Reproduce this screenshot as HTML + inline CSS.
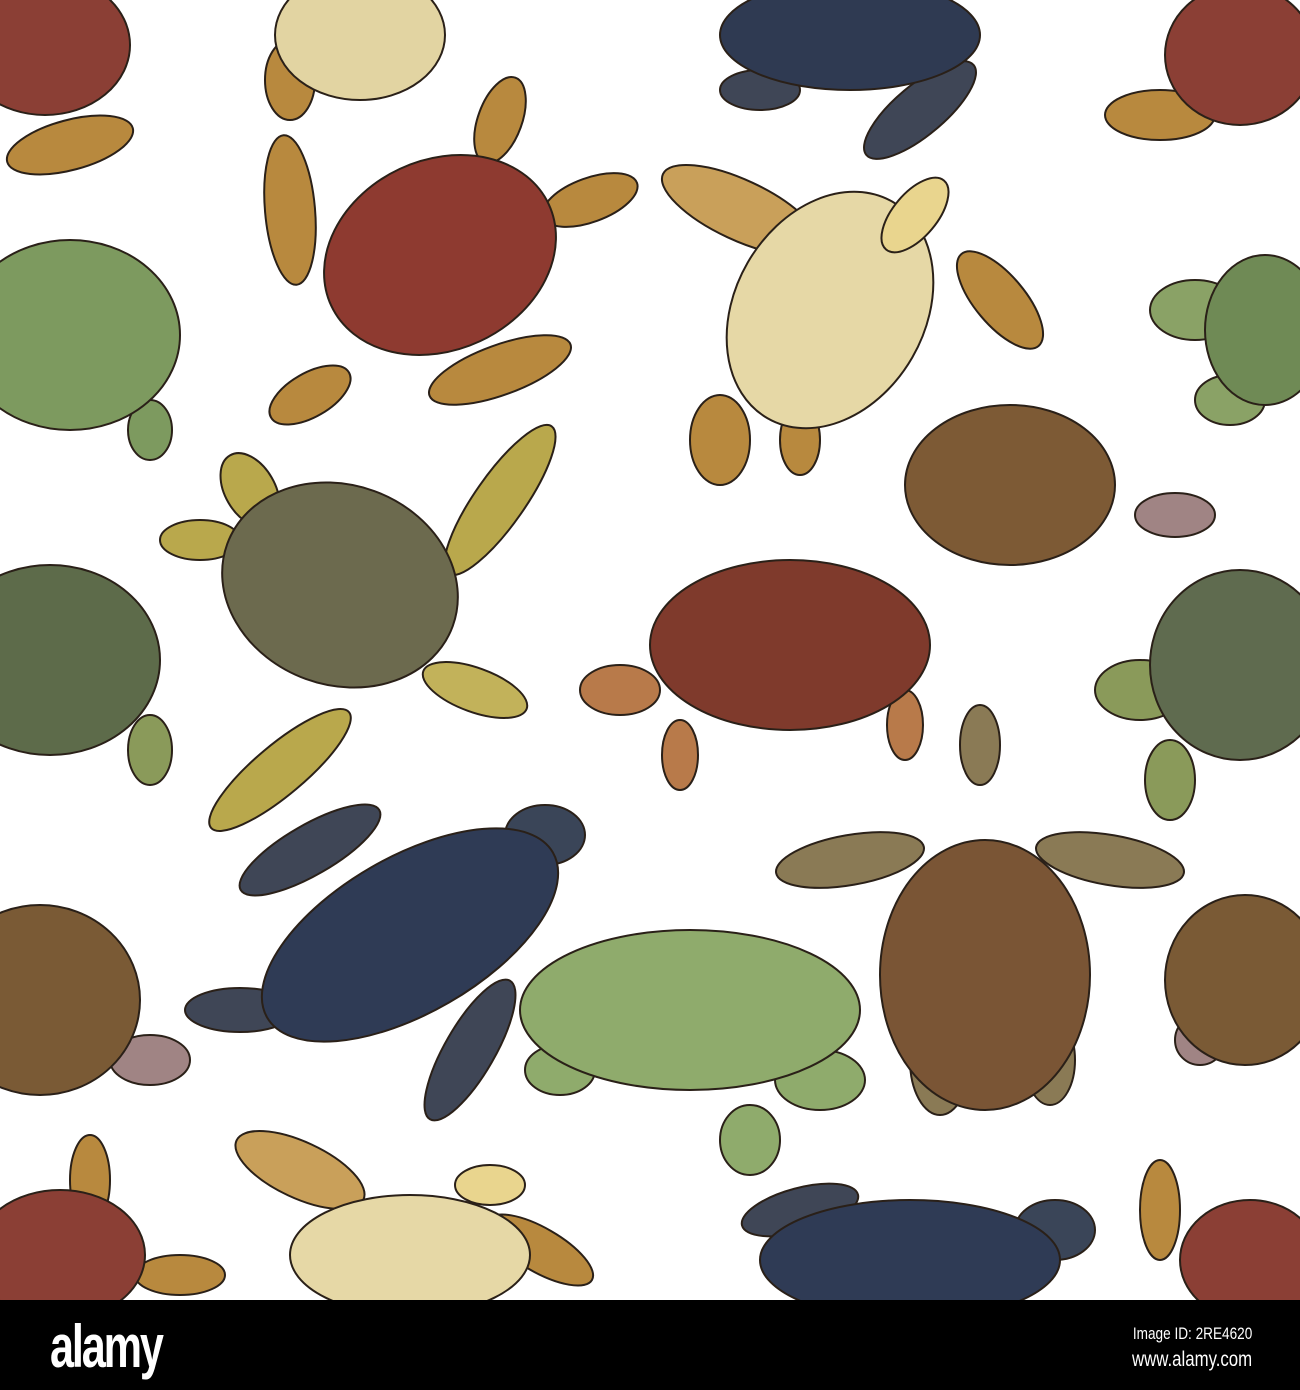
<!DOCTYPE html>
<html><head><meta charset="utf-8"><style>
html,body{margin:0;padding:0;background:#fff;width:1300px;height:1390px;overflow:hidden}
.bar{position:absolute;left:0;top:1300px;width:1300px;height:90px;background:#000}
.logo{position:absolute;left:50px;top:12px;color:#fff;font:bold 60px "Liberation Sans Narrow","Liberation Sans",sans-serif;letter-spacing:-3px;transform:scaleX(0.72);transform-origin:left top}
.id{position:absolute;right:48px;top:24px;color:#fff;font:17px "Liberation Sans Narrow","Liberation Sans",sans-serif;transform:scaleX(0.8);transform-origin:right top}
.www{position:absolute;right:48px;top:48px;color:#fff;font:21px "Liberation Sans Narrow","Liberation Sans",sans-serif;transform:scaleX(0.8);transform-origin:right top}
svg{position:absolute;left:0;top:0}
</style></head><body>
<svg width="1300" height="1300" viewBox="0 0 1300 1300" stroke="#2a2018" stroke-width="2">
<ellipse cx="70" cy="145" rx="65" ry="25" fill="#b8893e" transform="rotate(-15 70 145)"/>
<ellipse cx="45" cy="45" rx="85" ry="70" fill="#8b3f35"/>
<ellipse cx="290" cy="80" rx="25" ry="40" fill="#b8893e"/>
<ellipse cx="360" cy="35" rx="85" ry="65" fill="#e2d4a2"/>
<ellipse cx="920" cy="110" rx="70" ry="25" fill="#3f4656" transform="rotate(-40 920 110)"/>
<ellipse cx="760" cy="90" rx="40" ry="20" fill="#3f4656"/>
<ellipse cx="850" cy="35" rx="130" ry="55" fill="#2f3a52"/>
<ellipse cx="1160" cy="115" rx="55" ry="25" fill="#b8893e"/>
<ellipse cx="1240" cy="55" rx="75" ry="70" fill="#8b3f35"/>
<ellipse cx="290" cy="210" rx="25" ry="75" fill="#b8893e" transform="rotate(-5 290 210)"/>
<ellipse cx="500" cy="120" rx="22" ry="45" fill="#b8893e" transform="rotate(20 500 120)"/>
<ellipse cx="590" cy="200" rx="50" ry="22" fill="#b8893e" transform="rotate(-20 590 200)"/>
<ellipse cx="500" cy="370" rx="75" ry="25" fill="#b8893e" transform="rotate(-20 500 370)"/>
<ellipse cx="310" cy="395" rx="45" ry="22" fill="#b8893e" transform="rotate(-30 310 395)"/>
<ellipse cx="440" cy="255" rx="120" ry="95" fill="#8e3a30" transform="rotate(-25 440 255)"/>
<ellipse cx="740" cy="210" rx="85" ry="30" fill="#c9a05a" transform="rotate(25 740 210)"/>
<ellipse cx="1000" cy="300" rx="60" ry="25" fill="#b8893e" transform="rotate(50 1000 300)"/>
<ellipse cx="720" cy="440" rx="30" ry="45" fill="#b8893e"/>
<ellipse cx="800" cy="440" rx="20" ry="35" fill="#b8893e"/>
<ellipse cx="830" cy="310" rx="95" ry="125" fill="#e6d8a6" transform="rotate(30 830 310)"/>
<ellipse cx="915" cy="215" rx="45" ry="22" fill="#e9d58e" transform="rotate(-50 915 215)"/>
<ellipse cx="150" cy="430" rx="22" ry="30" fill="#7d9a5f"/>
<ellipse cx="70" cy="335" rx="110" ry="95" fill="#7d9a5f"/>
<ellipse cx="1195" cy="310" rx="45" ry="30" fill="#8aa266"/>
<ellipse cx="1230" cy="400" rx="35" ry="25" fill="#8aa266"/>
<ellipse cx="1265" cy="330" rx="60" ry="75" fill="#6f8a55"/>
<ellipse cx="1175" cy="515" rx="40" ry="22" fill="#a08484"/>
<ellipse cx="1010" cy="485" rx="105" ry="80" fill="#7d5a35"/>
<ellipse cx="250" cy="490" rx="25" ry="40" fill="#b9a84c" transform="rotate(-30 250 490)"/>
<ellipse cx="200" cy="540" rx="40" ry="20" fill="#b9a84c"/>
<ellipse cx="500" cy="500" rx="25" ry="90" fill="#b9a84c" transform="rotate(35 500 500)"/>
<ellipse cx="280" cy="770" rx="25" ry="90" fill="#b9a84c" transform="rotate(50 280 770)"/>
<ellipse cx="475" cy="690" rx="55" ry="22" fill="#c2b25a" transform="rotate(20 475 690)"/>
<ellipse cx="340" cy="585" rx="120" ry="100" fill="#6c6a4e" transform="rotate(20 340 585)"/>
<ellipse cx="620" cy="690" rx="40" ry="25" fill="#b87a4a"/>
<ellipse cx="680" cy="755" rx="18" ry="35" fill="#b87a4a"/>
<ellipse cx="905" cy="725" rx="18" ry="35" fill="#b87a4a"/>
<ellipse cx="790" cy="645" rx="140" ry="85" fill="#7f3a2c"/>
<ellipse cx="150" cy="750" rx="22" ry="35" fill="#8a9a5a"/>
<ellipse cx="50" cy="660" rx="110" ry="95" fill="#5d6b4a"/>
<ellipse cx="1140" cy="690" rx="45" ry="30" fill="#8a9a5a"/>
<ellipse cx="1170" cy="780" rx="25" ry="40" fill="#8a9a5a"/>
<ellipse cx="1240" cy="665" rx="90" ry="95" fill="#5f6b4f"/>
<ellipse cx="310" cy="850" rx="80" ry="25" fill="#3f4656" transform="rotate(-30 310 850)"/>
<ellipse cx="470" cy="1050" rx="80" ry="25" fill="#3f4656" transform="rotate(-60 470 1050)"/>
<ellipse cx="240" cy="1010" rx="55" ry="22" fill="#3f4656"/>
<ellipse cx="545" cy="835" rx="40" ry="30" fill="#3a4558"/>
<ellipse cx="410" cy="935" rx="165" ry="78" fill="#2f3b55" transform="rotate(-30 410 935)"/>
<ellipse cx="980" cy="745" rx="20" ry="40" fill="#8a7a55"/>
<ellipse cx="850" cy="860" rx="75" ry="25" fill="#8a7a55" transform="rotate(-10 850 860)"/>
<ellipse cx="1110" cy="860" rx="75" ry="25" fill="#8a7a55" transform="rotate(10 1110 860)"/>
<ellipse cx="940" cy="1060" rx="30" ry="55" fill="#8a7a55"/>
<ellipse cx="1050" cy="1060" rx="25" ry="45" fill="#8a7a55"/>
<ellipse cx="985" cy="975" rx="105" ry="135" fill="#7a5535"/>
<ellipse cx="820" cy="1080" rx="45" ry="30" fill="#8fab6c"/>
<ellipse cx="750" cy="1140" rx="30" ry="35" fill="#8fab6c"/>
<ellipse cx="560" cy="1070" rx="35" ry="25" fill="#8fab6c"/>
<ellipse cx="690" cy="1010" rx="170" ry="80" fill="#8fab6c"/>
<ellipse cx="150" cy="1060" rx="40" ry="25" fill="#a08484"/>
<ellipse cx="40" cy="1000" rx="100" ry="95" fill="#7a5a35"/>
<ellipse cx="1200" cy="1040" rx="25" ry="25" fill="#a08484"/>
<ellipse cx="1245" cy="980" rx="80" ry="85" fill="#7a5a35"/>
<ellipse cx="90" cy="1180" rx="20" ry="45" fill="#b8893e"/>
<ellipse cx="180" cy="1275" rx="45" ry="20" fill="#b8893e"/>
<ellipse cx="60" cy="1255" rx="85" ry="65" fill="#8b3f35"/>
<ellipse cx="300" cy="1170" rx="70" ry="28" fill="#c9a05a" transform="rotate(25 300 1170)"/>
<ellipse cx="540" cy="1250" rx="60" ry="22" fill="#b8893e" transform="rotate(30 540 1250)"/>
<ellipse cx="410" cy="1255" rx="120" ry="60" fill="#e6d8a6"/>
<ellipse cx="490" cy="1185" rx="35" ry="20" fill="#e9d58e"/>
<ellipse cx="800" cy="1210" rx="60" ry="22" fill="#3f4656" transform="rotate(-15 800 1210)"/>
<ellipse cx="1055" cy="1230" rx="40" ry="30" fill="#3a4558"/>
<ellipse cx="910" cy="1260" rx="150" ry="60" fill="#2f3b55"/>
<ellipse cx="1160" cy="1210" rx="20" ry="50" fill="#b8893e"/>
<ellipse cx="1250" cy="1260" rx="70" ry="60" fill="#8b3f35"/>
</svg>
<div class="bar">
<div class="logo">alamy</div>
<div class="id">Image ID: 2RE4620</div>
<div class="www">www.alamy.com</div>
</div>
</body></html>
